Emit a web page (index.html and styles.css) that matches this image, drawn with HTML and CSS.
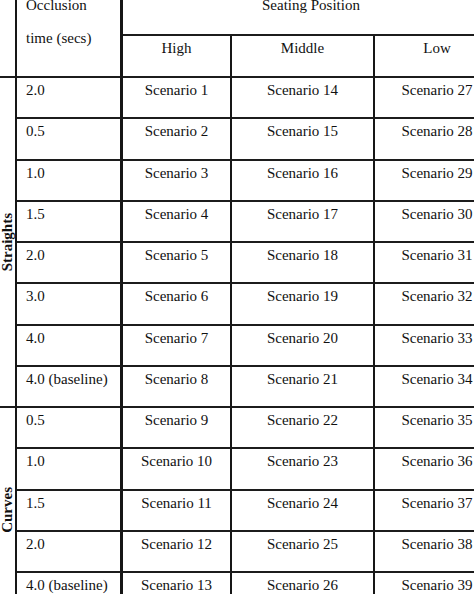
FILE: index.html
```html
<!DOCTYPE html>
<html>
<head>
<meta charset="utf-8">
<link rel="stylesheet" href="styles.css">
</head>
<body>
<div class="sheet">
  <div class="grid">
    <div class="c grp-h"></div>
    <div class="c occ"><div>Occlusion</div><div class="l2">time (secs)</div></div>
    <div class="c seat">Seating Position</div>
    <div class="c sub">High</div>
    <div class="c sub">Middle</div>
    <div class="c sub">Low</div>

    <div class="c grp straights"><span>Straights</span></div>
    <div class="c t">2.0</div><div class="c m">Scenario 1</div><div class="c m">Scenario 14</div><div class="c m">Scenario 27</div>
    <div class="c t">0.5</div><div class="c m">Scenario 2</div><div class="c m">Scenario 15</div><div class="c m">Scenario 28</div>
    <div class="c t">1.0</div><div class="c m">Scenario 3</div><div class="c m">Scenario 16</div><div class="c m">Scenario 29</div>
    <div class="c t">1.5</div><div class="c m">Scenario 4</div><div class="c m">Scenario 17</div><div class="c m">Scenario 30</div>
    <div class="c t">2.0</div><div class="c m">Scenario 5</div><div class="c m">Scenario 18</div><div class="c m">Scenario 31</div>
    <div class="c t">3.0</div><div class="c m">Scenario 6</div><div class="c m">Scenario 19</div><div class="c m">Scenario 32</div>
    <div class="c t">4.0</div><div class="c m">Scenario 7</div><div class="c m">Scenario 20</div><div class="c m">Scenario 33</div>
    <div class="c t">4.0 (baseline)</div><div class="c m">Scenario 8</div><div class="c m">Scenario 21</div><div class="c m">Scenario 34</div>

    <div class="c grp curves"><span>Curves</span></div>
    <div class="c t">0.5</div><div class="c m">Scenario 9</div><div class="c m">Scenario 22</div><div class="c m">Scenario 35</div>
    <div class="c t">1.0</div><div class="c m">Scenario 10</div><div class="c m">Scenario 23</div><div class="c m">Scenario 36</div>
    <div class="c t">1.5</div><div class="c m">Scenario 11</div><div class="c m">Scenario 24</div><div class="c m">Scenario 37</div>
    <div class="c t">2.0</div><div class="c m">Scenario 12</div><div class="c m">Scenario 25</div><div class="c m">Scenario 38</div>
    <div class="c t">4.0 (baseline)</div><div class="c m">Scenario 13</div><div class="c m">Scenario 26</div><div class="c m">Scenario 39</div>
  </div>
</div>
</body>
</html>
```
FILE: styles.css
```css
html, body {
  margin: 0;
  padding: 0;
  background: #fff;
}
body {
  width: 474px;
  height: 594px;
  overflow: hidden;
  font-family: "Liberation Serif", "Times New Roman", serif;
  font-size: 15px;
  line-height: 18px;
  color: #111;
}
.sheet {
  margin-top: -8px;
  width: 501px;
}
.grid {
  display: grid;
  grid-template-columns: 17px 106px 109px 143px 126px;
  grid-template-rows: 44px 42px repeat(13, 41.25px);
}
.c {
  box-sizing: border-box;
  border-right: 2px solid #161616;
  border-bottom: 2px solid #1c1c1c;
  padding-top: 3px;
}
.grp-h {
  grid-column: 1;
  grid-row: 1 / span 2;
}
.occ {
  grid-column: 2;
  grid-row: 1 / span 2;
  border-right-width: 3px;
  padding: 4px 0 0 9px;
}
.occ .l2 {
  margin-top: 15px;
}
.seat {
  grid-column: 3 / span 3;
  grid-row: 1;
  text-align: center;
  padding-top: 4px;
}
.sub {
  text-align: center;
}
.t {
  grid-column: 2;
  padding-left: 9px;
  border-right-width: 3px;
  white-space: nowrap;
}
.m {
  text-align: center;
  white-space: nowrap;
}
.grp {
  grid-column: 1;
  padding: 0;
  display: flex;
  align-items: center;
  justify-content: center;
  font-weight: bold;
}
.grp span {
  writing-mode: vertical-rl;
  transform: rotate(180deg);
  line-height: 15px;
}
.straights {
  grid-row: 3 / span 8;
}
.curves {
  grid-row: 11 / span 5;
}
```
